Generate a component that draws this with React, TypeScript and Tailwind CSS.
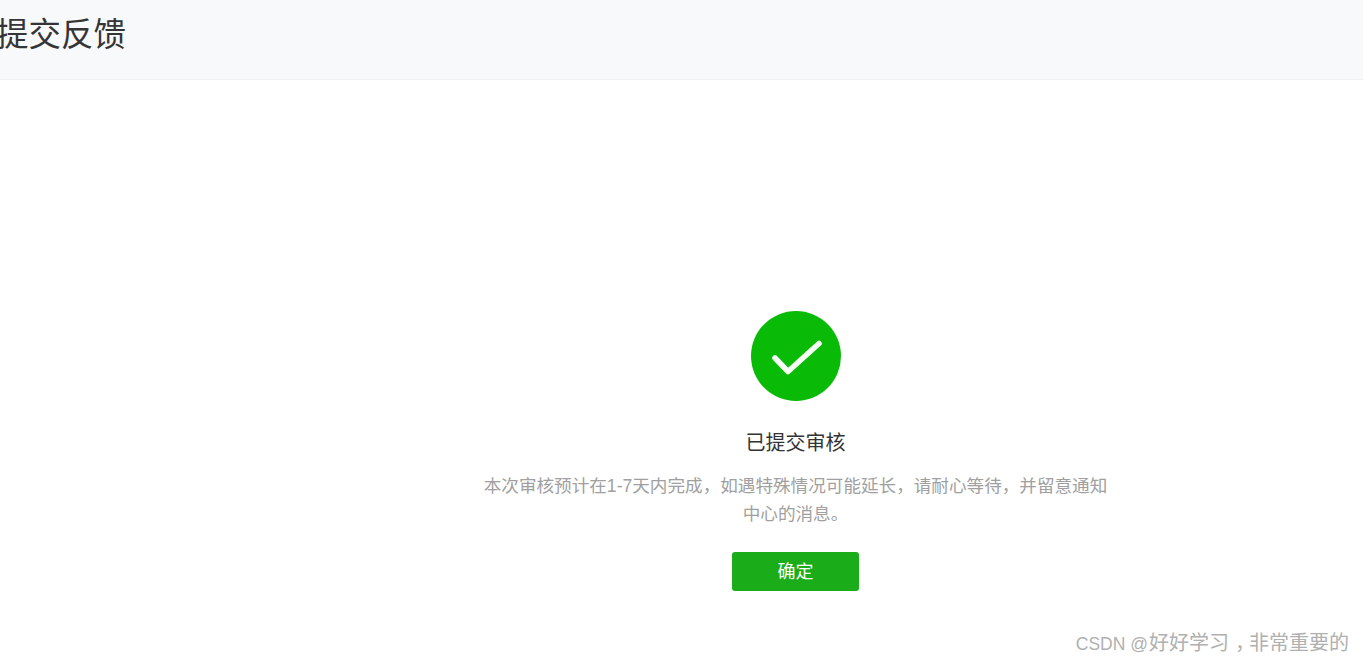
import React from "react";

const fontStack = "font-['Liberation_Sans','Noto_Sans_CJK_SC',sans-serif]";

export default function App() {
  return (
    <div className={`relative h-[662px] w-full overflow-hidden bg-white ${fontStack}`}>
      {/* page title bar */}
      <header className="flex h-[80px] items-center border-b border-[#eff0f3] bg-[#f8f9fb] pb-[10px]">
        <h1 className="-ml-[4px] text-[32.5px] leading-[44px] font-normal text-[#353535]">提交反馈</h1>
      </header>

      {/* result message */}
      <main className="flex justify-center pt-[231px] pl-[228px]">
        <div className="flex w-[640px] flex-col items-center">
          <div className="flex h-[90px] w-[90px] items-center justify-center rounded-full bg-[#09bb07]">
            <svg width="90" height="90" viewBox="0 0 90 90" fill="none">
              <path
                d="M24 47L37 60.5L68 32.5"
                stroke="#ffffff"
                strokeWidth="5.5"
                strokeLinecap="round"
                strokeLinejoin="round"
                opacity="0.96"
              />
            </svg>
          </div>
          <h2 className="mt-[27px] text-[20px] leading-[30px] font-normal text-[#333333]">已提交审核</h2>
          <p className="mt-[14px] w-[632px] text-center text-[17.6px] leading-[28px] text-[#a0a0a0]">
            本次审核预计在1-7天内完成，如遇特殊情况可能延长，请耐心等待，并留意通知中心的消息。
          </p>
          <button
            type="button"
            className="mt-[24px] h-[39px] w-[127px] rounded-[3px] bg-[#1aad19] pt-[1px] text-[18px] leading-[38px] text-white"
          >
            确定
          </button>
        </div>
      </main>

      {/* watermark */}
      <div className="absolute right-[14px] bottom-[4px] flex items-baseline text-[20px] leading-[28px] whitespace-nowrap text-[#b0b0b0]">
        <span className="text-[17.5px] mr-[1px]">CSDN @</span>
        <span>好好学习</span>
        <span className="pl-[6px] tracking-[-6px]">，</span>
        <span>非常重要的</span>
      </div>
    </div>
  );
}
